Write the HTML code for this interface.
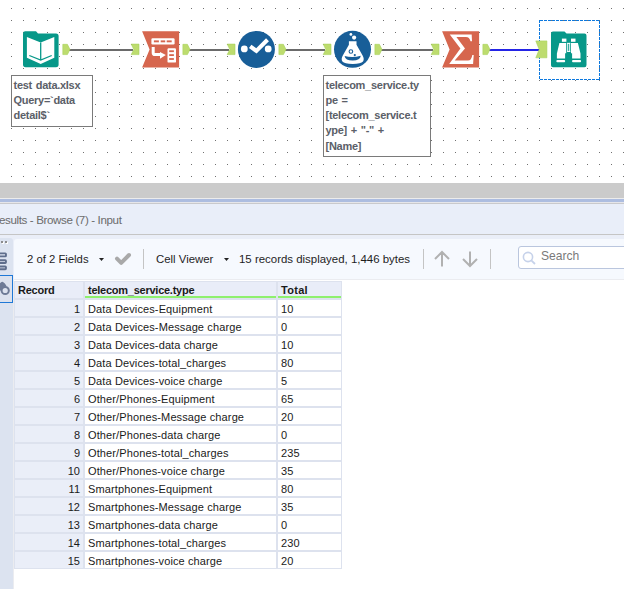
<!DOCTYPE html>
<html><head><meta charset="utf-8">
<style>
*{margin:0;padding:0;box-sizing:border-box}
html,body{width:624px;height:589px;overflow:hidden;background:#fff;font-family:"Liberation Sans",sans-serif}
.abs{position:absolute}
#canvas{position:absolute;left:0;top:0}
.ann{position:absolute;background:#fff;border:1px solid #7a7a7a;color:#5b6068;font-weight:bold;font-size:11px;line-height:15.2px;padding:1.8px 0 0 1.5px;white-space:pre;letter-spacing:-0.28px;word-spacing:1px}
.t{position:absolute;white-space:nowrap}
.row{position:absolute;left:14px;height:16px;width:328px}

.hd{background:#e9edf8}
.ht{position:absolute;top:1px;font-weight:bold;font-size:11px;line-height:14px;color:#1a1a1a;letter-spacing:-0.25px;white-space:nowrap}
.gr{position:absolute;left:0;bottom:0;width:100%;height:2px;background:#8ef06e}
.rc{left:15px;width:68px;height:16px;background:#eaeef8}
.num{position:absolute;right:3px;top:2px;font-size:11px;line-height:14px;color:#1a1a1a}
.dc{height:16px;background:#fff}
.dt{position:absolute;left:3px;top:2px;font-size:11px;letter-spacing:0.12px;line-height:14px;color:#1a1a1a;white-space:nowrap}
</style></head><body>
<svg id="canvas" width="624" height="183" viewBox="0 0 624 183">
<defs>
<pattern id="dots" x="11" y="8" width="12" height="12" patternUnits="userSpaceOnUse">
<rect x="0" y="0" width="1" height="1" fill="#707070"/>
</pattern>
</defs>
<rect x="0" y="0" width="624" height="183" fill="url(#dots)" shape-rendering="crispEdges"/>
<!-- connectors -->
<g shape-rendering="crispEdges">
<rect x="69" y="49" width="64" height="2" fill="#6a6a6a"/>
<rect x="189" y="49" width="40" height="2" fill="#6a6a6a"/>
<rect x="285" y="49" width="40" height="2" fill="#6a6a6a"/>
<rect x="381" y="49" width="52" height="2" fill="#6a6a6a"/>
<rect x="489" y="49" width="50" height="2" fill="#2424e6"/>
</g>
<!-- input tool -->
<path d="M25.3,31.3 H36 L38,33.4 H56 Q58.6,33.4 58.6,36 V64.6 Q58.6,67.2 56,67.2 H25.6 Q23,67.2 23,64.6 V33.6 Q23,31.3 25.3,31.3 Z" fill="#079889"/>
<path d="M26.9,36.9 L40.7,42.6 L54.3,36.9 V57.8 L40.7,64 L26.9,57.8 Z" fill="#fff"/>
<path d="M40.7,42.6 V60 M29.3,55.5 L40.7,60.1 L51.7,55.5" stroke="#079889" stroke-width="1.3" fill="none"/>
<!-- transpose -->
<path d="M142.1,31.2 H179.1 V67.6 H142.1 L149.6,49.4 Z" fill="#d6664e"/>
<rect x="151.4" y="38.3" width="23.2" height="6.2" rx="1.2" fill="#fff"/>
<g fill="#d6664e"><rect x="153.9" y="40.4" width="5" height="1.9"/><rect x="160.7" y="40.4" width="4.5" height="1.9"/><rect x="166.7" y="40.4" width="5" height="1.9"/></g>
<path d="M153.2,46.9 V53 Q153.2,54.6 155,54.6 H161" stroke="#fff" stroke-width="3" fill="none"/>
<path d="M160,51.9 L165.8,55.1 L160,58.7 Z" fill="#fff"/>
<rect x="167.5" y="48.3" width="8.5" height="14.3" rx="1.2" fill="#fff"/>
<g fill="#d6664e"><rect x="169.2" y="50.3" width="4.7" height="1.8"/><rect x="169.2" y="54.2" width="4.7" height="1.8"/><rect x="169.2" y="58.1" width="4.7" height="1.8"/></g>
<!-- select -->
<circle cx="256.4" cy="49.4" r="18.5" fill="#185e98"/>
<circle cx="244.3" cy="48.9" r="3.4" fill="#fff"/>
<circle cx="268.2" cy="48.9" r="3.4" fill="#fff"/>
<path d="M250.2,46.3 L256.4,50.9 L267.5,39.8" stroke="#fff" stroke-width="4.1" fill="none" stroke-linejoin="miter"/>
<!-- formula -->
<circle cx="352.5" cy="49.3" r="18.5" fill="#185e98"/>
<path d="M348.9,41.2 H356.5 V44.8 L362.6,55.5 Q364.6,59.2 363,61.6 Q361,63.9 352.7,63.9 Q344.4,63.9 342.4,61.6 Q340.8,59.2 342.8,55.5 L348.9,44.8 Z" fill="#fff"/>
<path d="M344.6,56.1 Q352.7,58.2 360.8,55.8 Q360.2,60.6 352.7,60.6 Q345.3,60.6 344.6,56.1 Z" fill="#185e98"/>
<circle cx="350.9" cy="51.5" r="1.8" stroke="#185e98" stroke-width="1.1" fill="none"/>
<circle cx="354.8" cy="55.1" r="1.1" fill="#185e98"/>
<circle cx="350.9" cy="34.4" r="1.4" fill="#fff"/>
<circle cx="354.1" cy="37.6" r="2.1" fill="#fff"/>
<!-- summarize -->
<path d="M442.1,31.2 H479.1 V67.6 H442.1 L449.6,49.4 Z" fill="#d6664e"/>
<path d="M449.75,34.6 H471.7 L472,41.2 H470.5 Q469.5,36.9 466,36.9 H456.4 L465,48.4 L454.7,60.6 H468 Q471.5,60.6 472.3,55.1 H473.7 L473.1,64 H449.2 L460.4,48.6 Z" fill="#fff"/>
<!-- browse -->
<path d="M553,31.5 H564.5 L566.5,33.6 H584.5 Q586.5,33.6 586.5,35.6 V65 Q586.5,67.2 584.5,67.2 H553 Q551,67.2 551,65.2 V33.5 Q551,31.5 553,31.5 Z" fill="#079889"/>
<g fill="#fff">
<rect x="561.9" y="38.6" width="4.5" height="3.2"/>
<rect x="571" y="38.6" width="4.5" height="3.2"/>
<path d="M559.4,42.9 H566.2 V53.2 H565.1 V58.6 H556.9 V53.6 Z"/>
<path d="M571,42.9 H577.9 L580.5,53.6 V58.6 H572.1 V53.2 H571 Z"/>
<rect x="567.2" y="42.9" width="1" height="9"/>
<rect x="569.2" y="42.9" width="1" height="9"/>
<rect x="567.2" y="42.9" width="3" height="1"/>
<rect x="567.2" y="50.9" width="3" height="1"/>
<rect x="556.4" y="60" width="8.7" height="2.2" rx="0.8"/>
<rect x="572.1" y="60" width="8.9" height="2.2" rx="0.8"/>
</g>
<rect x="539.5" y="20.5" width="60" height="59" fill="none" stroke="#0c78de" stroke-width="1" stroke-dasharray="3,1" shape-rendering="crispEdges"/>
<!-- anchors -->
<g fill="#bddc6e" stroke="#a6d25a" stroke-width="0.6">
<path d="M62.8,44.3 H67.4 L70,49.5 L67.4,54.6 H62.8 Z"/>
<path d="M182.9,44.3 H187.4 L190,49.5 L187.4,54.6 H182.9 Z"/>
<path d="M278.9,44.3 H283.4 L286,49.5 L283.4,54.6 H278.9 Z"/>
<path d="M374.9,44.3 H379.4 L382,49.5 L379.4,54.6 H374.9 Z"/>
<path d="M482.9,44.3 H487.4 L490,49.5 L487.4,54.6 H482.9 Z"/>
<path d="M131.2,44.1 H139 V54.6 H131.2 L133.8,49.5 Z"/>
<path d="M227.2,44.1 H235 V54.6 H227.2 L229.8,49.5 Z"/>
<path d="M323.2,44.1 H331 V54.6 H323.2 L325.8,49.5 Z"/>
<path d="M431.2,44.1 H439 V54.6 H431.2 L433.8,49.5 Z"/>
<path d="M535.8,40.9 H546.9 V57.8 H535.8 L539.2,49.5 Z"/>
</g>
</svg>
<div class="ann" style="left:11px;top:75px;width:82px;height:52px">test data.xlsx
Query=`data
detail$`</div>
<div class="ann" style="left:323px;top:75px;width:108px;height:82px">telecom_service.ty
pe =
[telecom_service.t
ype] + "-" +
[Name]</div>

<!-- splitter / panel -->
<div class="abs" style="left:0;top:183px;width:624px;height:15px;background:#cbcbcb"></div>
<div class="abs" style="left:0;top:198px;width:624px;height:1px;background:#ececec"></div>
<div class="abs" style="left:0;top:199px;width:624px;height:3px;background:#adbde0"></div>
<div class="abs" style="left:0;top:202px;width:624px;height:1px;background:#e6e6ea"></div>
<div class="abs" style="left:0;top:203px;width:624px;height:1px;background:#c9c9cc"></div>
<div class="abs" style="left:0;top:204px;width:624px;height:30px;background:#e9eef9"></div>
<div class="t" style="left:-1px;top:213px;font-size:11.6px;letter-spacing:-0.38px;color:#6b6b6b">esults - Browse (7) - Input</div>
<div class="abs" style="left:0;top:234px;width:624px;height:1px;background:#c5c5c5"></div>
<div class="abs" style="left:0;top:235px;width:624px;height:354px;background:#eaeef8"></div>
<!-- sidebar -->
<div class="abs" style="left:0;top:238px;width:13px;height:351px;background:#dce3f0;border-top-right-radius:3px"></div>
<div class="abs" style="left:13px;top:280px;width:1px;height:309px;background:#ebecf0"></div>
<!-- toolbar -->
<div class="abs" style="left:14px;top:239px;width:610px;height:40px;background:#f6f9fe;border-top-left-radius:3px"></div>
<div class="abs" style="left:14px;top:279px;width:610px;height:310px;background:#fff"></div>
<div class="abs" style="left:14px;top:279px;width:610px;height:1px;background:#ebecf0"></div>

<!-- sidebar icons -->
<div class="abs" style="left:1px;top:241px;width:2px;height:2px;background:#8c8c8c;box-shadow:1px 1px 0 #fff"></div>
<div class="abs" style="left:5px;top:241px;width:2px;height:2px;background:#8c8c8c;box-shadow:1px 1px 0 #fff"></div>
<svg class="abs" style="left:0;top:250px" width="13" height="24" viewBox="0 0 13 24">
<g fill="none" stroke="#5f6e8c" stroke-width="1.9">
<rect x="-3" y="3.4" width="8.95" height="3" rx="0.7"/>
<rect x="-3" y="10.2" width="8.95" height="2.8" rx="0.7"/>
<rect x="-3" y="16.5" width="8.95" height="2.7" rx="0.7"/>
</g></svg>
<div class="abs" style="left:-2px;top:275px;width:15px;height:28px;border:1px solid #1f78d6;background:#dce2ee"></div>
<svg class="abs" style="left:0;top:276px" width="12" height="26" viewBox="0 0 12 26">
<circle cx="5.2" cy="14.5" r="3.6" fill="none" stroke="#6e7b96" stroke-width="2"/>
<path d="M-1,9 Q1,5 3,6 Q5,7 6.5,10 L3,12 L0,15 Z" fill="#6e7b96"/>
</svg>
<!-- toolbar content -->
<div class="t" style="left:27px;top:253px;font-size:11.3px;color:#1e1e1e">2 of 2 Fields</div>
<svg class="abs" style="left:99px;top:258px" width="6" height="4"><path d="M0,0 H5 L2.5,3 Z" fill="#222"/></svg>
<svg class="abs" style="left:112px;top:250px" width="22" height="18"><path d="M5,8.6 L9.2,12.8 L17,5" stroke="#a9a9a9" stroke-width="4" stroke-linecap="round" stroke-linejoin="round" fill="none"/></svg>
<div class="abs" style="left:143px;top:249px;width:1px;height:20px;background:#c4c4c4"></div>
<div class="t" style="left:156px;top:253px;font-size:11.4px;color:#1e1e1e">Cell Viewer</div>
<svg class="abs" style="left:224px;top:258px" width="6" height="4"><path d="M0,0 H5 L2.5,3 Z" fill="#222"/></svg>
<div class="t" style="left:239px;top:253px;font-size:11.45px;color:#1e1e1e">15 records displayed, 1,446 bytes</div>
<div class="abs" style="left:423px;top:249px;width:1px;height:20px;background:#c4c4c4"></div>
<svg class="abs" style="left:432px;top:249px" width="50" height="20" viewBox="0 0 50 20">
<g stroke="#b1b1b1" stroke-width="2" fill="none">
<path d="M10,2.5 V17.5 M3,10 L10,3 L17,10"/>
<path d="M38,2.5 V17.5 M31,10 L38,17 L45,10"/>
</g></svg>
<div class="abs" style="left:490px;top:249px;width:1px;height:20px;background:#c4c4c4"></div>
<div class="abs" style="left:518px;top:246px;width:120px;height:23px;border:1px solid #bac6de;border-radius:3px;background:#fff"></div>
<svg class="abs" style="left:521px;top:250px" width="16" height="16" viewBox="0 0 16 16">
<circle cx="7" cy="7" r="4.6" stroke="#c6d2ea" stroke-width="1.6" fill="none"/>
<path d="M10.3,10.3 L14,14" stroke="#c6d2ea" stroke-width="1.8"/>
</svg>
<div class="t" style="left:541px;top:249px;font-size:12.1px;color:#7a7a7a">Search</div>
<div class="abs" style="left:14px;top:281px;width:328px;height:288px;background:#dde2ee"></div>
<div class="abs hd" style="left:15px;top:282px;width:68px;height:16px"><span class="ht" style="left:3px">Record</span></div>
<div class="abs hd" style="left:85px;top:282px;width:191px;height:16px"><span class="ht" style="left:3px">telecom_service.type</span><div class="gr"></div></div>
<div class="abs hd" style="left:278px;top:282px;width:63px;height:16px"><span class="ht" style="left:3px;letter-spacing:0.3px">Total</span><div class="gr"></div></div>
<div class="abs rc" style="top:300px"><span class="num">1</span></div>
<div class="abs dc" style="left:85px;top:300px;width:191px"><span class="dt">Data Devices-Equipment</span></div>
<div class="abs dc" style="left:278px;top:300px;width:63px"><span class="dt">10</span></div>
<div class="abs rc" style="top:318px"><span class="num">2</span></div>
<div class="abs dc" style="left:85px;top:318px;width:191px"><span class="dt">Data Devices-Message charge</span></div>
<div class="abs dc" style="left:278px;top:318px;width:63px"><span class="dt">0</span></div>
<div class="abs rc" style="top:336px"><span class="num">3</span></div>
<div class="abs dc" style="left:85px;top:336px;width:191px"><span class="dt">Data Devices-data charge</span></div>
<div class="abs dc" style="left:278px;top:336px;width:63px"><span class="dt">10</span></div>
<div class="abs rc" style="top:354px"><span class="num">4</span></div>
<div class="abs dc" style="left:85px;top:354px;width:191px"><span class="dt">Data Devices-total_charges</span></div>
<div class="abs dc" style="left:278px;top:354px;width:63px"><span class="dt">80</span></div>
<div class="abs rc" style="top:372px"><span class="num">5</span></div>
<div class="abs dc" style="left:85px;top:372px;width:191px"><span class="dt">Data Devices-voice charge</span></div>
<div class="abs dc" style="left:278px;top:372px;width:63px"><span class="dt">5</span></div>
<div class="abs rc" style="top:390px"><span class="num">6</span></div>
<div class="abs dc" style="left:85px;top:390px;width:191px"><span class="dt">Other/Phones-Equipment</span></div>
<div class="abs dc" style="left:278px;top:390px;width:63px"><span class="dt">65</span></div>
<div class="abs rc" style="top:408px"><span class="num">7</span></div>
<div class="abs dc" style="left:85px;top:408px;width:191px"><span class="dt">Other/Phones-Message charge</span></div>
<div class="abs dc" style="left:278px;top:408px;width:63px"><span class="dt">20</span></div>
<div class="abs rc" style="top:426px"><span class="num">8</span></div>
<div class="abs dc" style="left:85px;top:426px;width:191px"><span class="dt">Other/Phones-data charge</span></div>
<div class="abs dc" style="left:278px;top:426px;width:63px"><span class="dt">0</span></div>
<div class="abs rc" style="top:444px"><span class="num">9</span></div>
<div class="abs dc" style="left:85px;top:444px;width:191px"><span class="dt">Other/Phones-total_charges</span></div>
<div class="abs dc" style="left:278px;top:444px;width:63px"><span class="dt">235</span></div>
<div class="abs rc" style="top:462px"><span class="num">10</span></div>
<div class="abs dc" style="left:85px;top:462px;width:191px"><span class="dt">Other/Phones-voice charge</span></div>
<div class="abs dc" style="left:278px;top:462px;width:63px"><span class="dt">35</span></div>
<div class="abs rc" style="top:480px"><span class="num">11</span></div>
<div class="abs dc" style="left:85px;top:480px;width:191px"><span class="dt">Smartphones-Equipment</span></div>
<div class="abs dc" style="left:278px;top:480px;width:63px"><span class="dt">80</span></div>
<div class="abs rc" style="top:498px"><span class="num">12</span></div>
<div class="abs dc" style="left:85px;top:498px;width:191px"><span class="dt">Smartphones-Message charge</span></div>
<div class="abs dc" style="left:278px;top:498px;width:63px"><span class="dt">35</span></div>
<div class="abs rc" style="top:516px"><span class="num">13</span></div>
<div class="abs dc" style="left:85px;top:516px;width:191px"><span class="dt">Smartphones-data charge</span></div>
<div class="abs dc" style="left:278px;top:516px;width:63px"><span class="dt">0</span></div>
<div class="abs rc" style="top:534px"><span class="num">14</span></div>
<div class="abs dc" style="left:85px;top:534px;width:191px"><span class="dt">Smartphones-total_charges</span></div>
<div class="abs dc" style="left:278px;top:534px;width:63px"><span class="dt">230</span></div>
<div class="abs rc" style="top:552px"><span class="num">15</span></div>
<div class="abs dc" style="left:85px;top:552px;width:191px"><span class="dt">Smartphones-voice charge</span></div>
<div class="abs dc" style="left:278px;top:552px;width:63px"><span class="dt">20</span></div>
</body></html>
